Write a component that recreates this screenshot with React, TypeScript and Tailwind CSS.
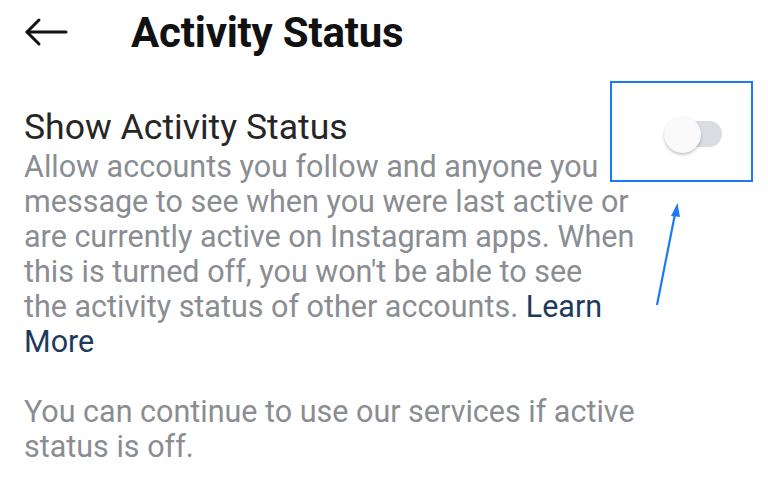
import { useState } from "react";

export default function App() {
  const [on, setOn] = useState(false);

  return (
    <div className="relative w-[768px] h-[485px] overflow-hidden bg-white font-['Roboto',sans-serif]">
      <header className="flex items-center h-[64px] pl-[24px]">
        <svg width="44" height="30" viewBox="0 0 44 30" fill="none" stroke="#111" strokeWidth="3" strokeLinecap="round" strokeLinejoin="round">
          <path d="M42 15H3" />
          <path d="M15 3L3 15l12 12" />
        </svg>
        <h1 className="ml-[63px] text-[42px] font-bold text-[#111] tracking-[-0.2px]">Activity Status</h1>
      </header>

      <section className="flex pl-[24px] pt-[44px]">
        <div className="w-[616px] shrink-0">
          <h2 className="text-[35.6px] leading-[38px] text-[#262626]">Show Activity Status</h2>
          <p className="mt-[3px] whitespace-nowrap text-[30.5px] leading-[35px] text-[#8a8d92]">
            Allow accounts you follow and anyone you<br />
            message to see when you were last active or<br />
            are currently active on Instagram apps. When<br />
            this is turned off, you won't be able to see<br />
            the activity status of other accounts.{" "}
            <span className="text-[#1c3b5c]">Learn<br />More</span>
          </p>
          <p className="mt-[35px] whitespace-nowrap text-[30.5px] leading-[35px] text-[#8a8d92]">
            You can continue to use our services if active<br />
            status is off.
          </p>
        </div>
        <div className="ml-[24px] pt-[7px]">
          <button
            onClick={() => setOn(!on)}
            className="relative w-[58px] h-[38px] flex items-center"
          >
            <span className={`absolute right-0 w-[42px] h-[26px] rounded-full ${on ? "bg-[#b3d4f5]" : "bg-[#d9dce1]"}`} />
            <span className={`absolute w-[37px] h-[37px] rounded-full bg-[#fafafa] shadow-[0_2px_3px_rgba(0,0,0,0.22)] ${on ? "left-[21px]" : "left-0"}`} />
          </button>
        </div>
      </section>

      {/* annotation */}
      <div className="absolute left-[610px] top-[81px] w-[143px] h-[101px] border-2 border-[#1a7bf2]" />
      <svg className="absolute left-0 top-0 pointer-events-none" width="768" height="485">
        <line x1="657" y1="305" x2="675" y2="214" stroke="#1a7bf2" strokeWidth="2.2" />
        <polygon points="677.5,203 671,216 680,217" fill="#1a7bf2" />
      </svg>
    </div>
  );
}
